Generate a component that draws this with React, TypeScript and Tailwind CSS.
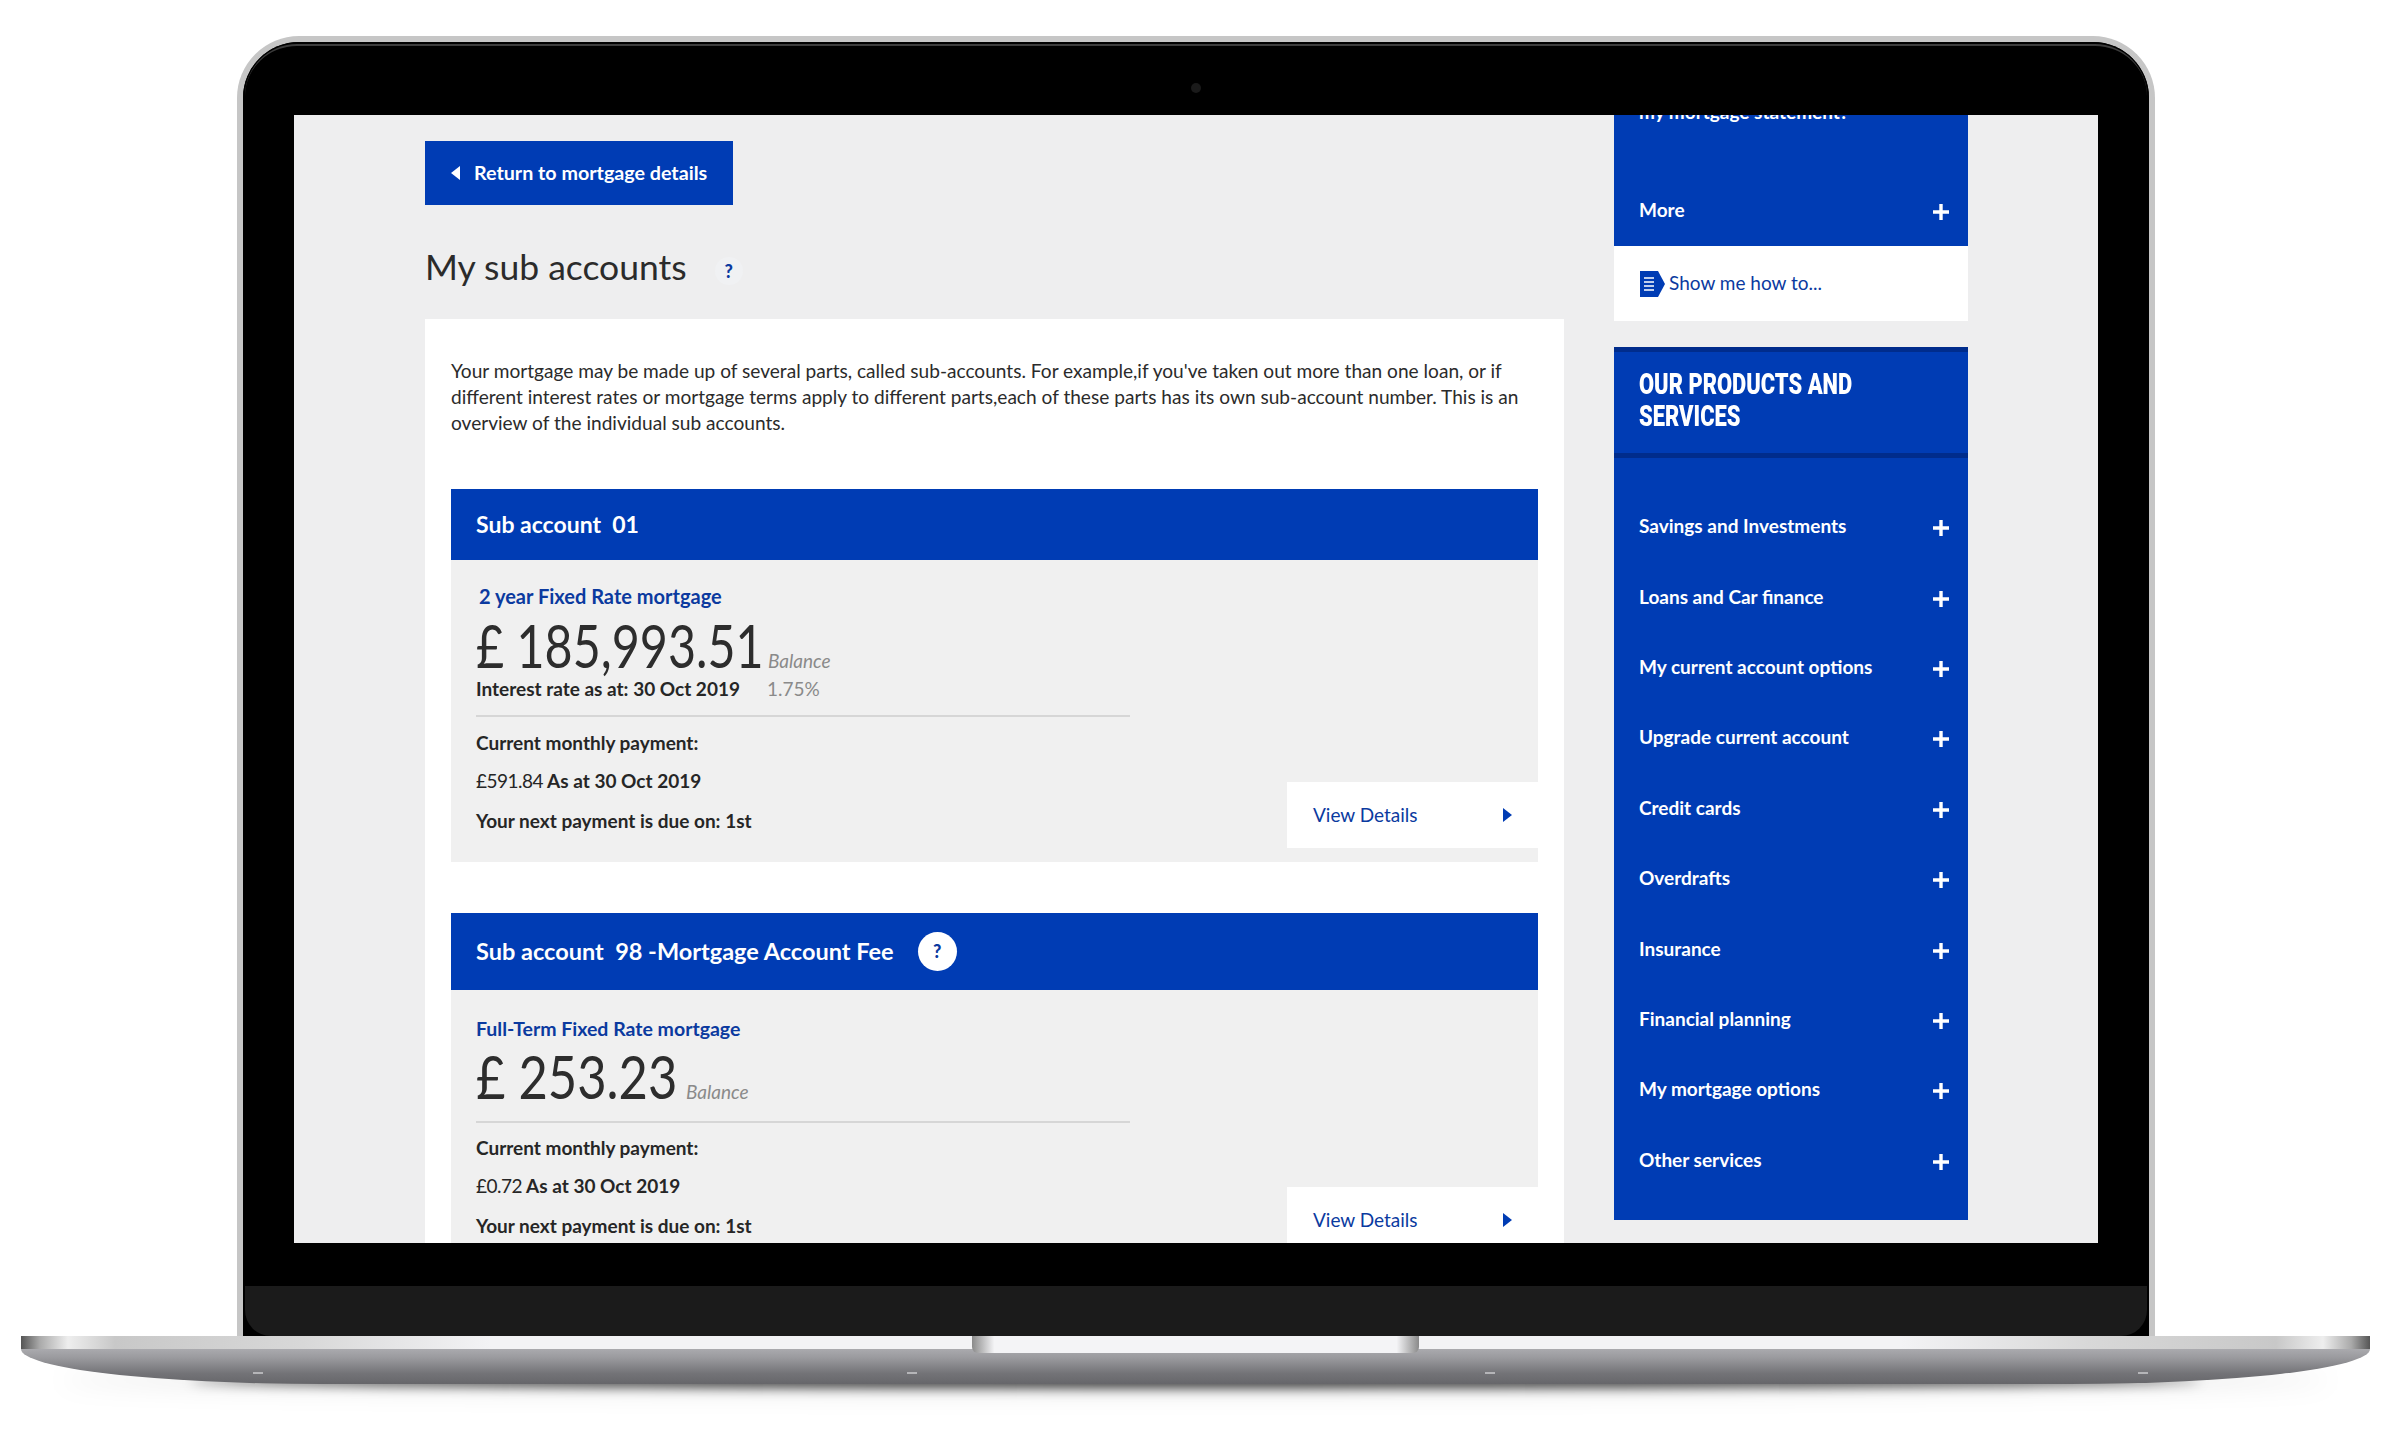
const font = { fontFamily: "Lato, 'Open Sans', sans-serif" };

function Plus() {
  return (
    <svg width="18" height="18" viewBox="0 0 18 18" className="mt-1 shrink-0">
      <path d="M9 1v16M1 9h16" stroke="#fff" strokeWidth="3.4" fill="none" />
    </svg>
  );
}

function Row({ label }: { label: string }) {
  return (
    <div className="flex h-[70.4px] items-center justify-between pl-[25px] pr-[18px] text-[19px] font-bold leading-6 text-white">
      <span>{label}</span>
      <Plus />
    </div>
  );
}

function ViewDetails({ className }: { className: string }) {
  return (
    <div className={`flex w-[251px] shrink-0 items-center justify-between bg-white pl-[26px] pr-[26px] text-[19px] text-[#0b3a9f] ${className}`}>
      <span>View Details</span>
      <svg width="9" height="14" viewBox="0 0 9 14"><path d="M0 0l9 7-9 7z" fill="#003cb4" /></svg>
    </div>
  );
}

const B = "text-[19px] font-bold leading-6 text-[#262626]";

function Amount({ value, width, scale }: { value: string; width: string; scale: string }) {
  return (
    <div className="flex h-16 items-baseline">
      <span className={`inline-block origin-left whitespace-nowrap text-[60px] leading-[64px] text-[#2d2d2d] ${width} ${scale}`}>{value}</span>
      <span className="ml-[7px] text-[19px] italic text-[#8a8a8a]">Balance</span>
    </div>
  );
}

export default function App() {
  return (
    <div className="relative h-[1431px] w-[2400px] overflow-hidden bg-white pt-[36px]" style={font}>
      {/* lid */}
      <div className="ml-[237px] h-[1300px] w-[1918px] rounded-t-[62px] border-x-[6px] border-t-[6px] border-[#c6c6c6] bg-black">
        <div className="flex h-full flex-col rounded-t-[56px] border-x-2 border-t-2 border-[#000] bg-black">
          <div className="flex h-[71px] shrink-0 items-center justify-center rounded-t-[52px] border-t-2 border-[#3c3c3c]">
            <div className="mt-[15px] h-[10px] w-[10px] rounded-full bg-[#1a1a1a]" />
          </div>
          {/* screen */}
          <div className="mx-[49px] flex h-[1128px] shrink-0 overflow-hidden bg-[#eeeeef] pl-[131px]">
            <main className="w-[1139px] shrink-0 pt-[26px]">
              <div className="flex h-16 w-[308px] items-center bg-[#003cb4] pl-[26px] text-[19.7px] font-bold text-white">
                <svg width="9" height="14" viewBox="0 0 9 14" className="mr-[14px]"><path d="M9 0L0 7l9 7z" fill="#fff" /></svg>
                Return to mortgage details
              </div>
              <div className="mt-[35px] flex h-[54px] items-center">
                <h1 className="text-[35.5px] font-normal leading-[54px] text-[#2b2b2b]">My sub accounts</h1>
                <span className="ml-[28px] mt-2 flex h-7 w-7 items-center justify-center rounded-full bg-[#f0f1f3] text-[18px] font-black text-[#0b3a9f]">?</span>
              </div>
              <section className="mt-[25px] bg-white px-[26px] pt-[39px]">
                <p className="mb-[53px] whitespace-nowrap text-[19.1px] leading-[26px] text-[#2b2b2b]">
                  Your mortgage may be made up of several parts, called sub-accounts. For example,if you've taken out more than one loan, or if
                  <br />different interest rates or mortgage terms apply to different parts,each of these parts has its own sub-account number. This is an
                  <br />overview of the individual sub accounts.
                </p>

                <div className="flex h-[71px] items-center bg-[#003cb4] pl-[25px] text-[23px] font-bold text-white">Sub account&nbsp; 01</div>
                <div className="flex h-[302px] items-end justify-between bg-[#f0f0f0]">
                  <div className="h-full w-[679px] pl-[25px] pt-[23px]">
                    <div className="ml-[3px] text-[20px] font-bold leading-[26px] text-[#0b3a9f]">2 year Fixed Rate mortgage</div>
                    <div className="mt-[4px]"><Amount value="£ 185,993.51" width="w-[285px]" scale="scale-x-[0.807]" /></div>
                    <div className={`flex ${B}`}>
                      <span className="w-[291px]">Interest rate as at: 30 Oct 2019</span>
                      <span className="font-normal text-[#8a8a8a]">1.75%</span>
                    </div>
                    <div className="mt-[14px] h-[2px] bg-[#d6d6d6]" />
                    <div className={`mt-[14px] ${B}`}>Current monthly payment:</div>
                    <div className={`mt-[14px] ${B}`}><span className="font-normal tracking-[-0.5px]">£591.84</span> As at 30 Oct 2019</div>
                    <div className={`mt-[16px] ${B}`}>Your next payment is due on: 1st</div>
                  </div>
                  <ViewDetails className="mb-[14px] h-[66px]" />
                </div>

                <div className="mt-[51px] flex h-[77px] items-center bg-[#003cb4] pl-[25px] text-[23.5px] font-bold text-white">
                  Sub account&nbsp; 98 -Mortgage Account Fee
                  <span className="ml-[24px] flex h-[39px] w-[39px] items-center justify-center rounded-full bg-white text-[18px] font-black text-[#0b3a9f]">?</span>
                </div>
                <div className="flex h-[302px] items-start justify-between bg-[#f0f0f0]">
                  <div className="h-full w-[679px] pl-[25px] pt-[26px]">
                    <div className="text-[19.5px] font-bold leading-[26px] text-[#0b3a9f]">Full-Term Fixed Rate mortgage</div>
                    <div className="mt-[2px]"><Amount value="£ 253.23" width="w-[203px]" scale="scale-x-[0.845]" /></div>
                    <div className="mt-[13px] h-[2px] bg-[#d6d6d6]" />
                    <div className={`mt-[13px] ${B}`}>Current monthly payment:</div>
                    <div className={`mt-[14px] ${B}`}><span className="font-normal tracking-[-0.5px]">£0.72</span> As at 30 Oct 2019</div>
                    <div className={`mt-[16px] ${B}`}>Your next payment is due on: 1st</div>
                  </div>
                  <ViewDetails className="mt-[197px] h-[66px]" />
                </div>
              </section>
            </main>

            <aside className="ml-[50px] w-[354px] shrink-0">
              <div className="-mt-[15px] h-[146px] bg-[#003cb4] pl-[25px] pr-[18px] text-[19px] font-bold leading-6 text-white">
                <div>my mortgage statement?</div>
                <div className="mt-[74px] flex items-center justify-between"><span>More</span><Plus /></div>
              </div>
              <div className="flex h-[75px] items-center bg-white pl-[25px]">
                <svg width="28" height="28" viewBox="0 0 28 28" className="mr-[2px]">
                  <path d="M1 1h18l7 13-7 13H1z" fill="#003cb4" />
                  <path d="M5 8h10M5 12h10M5 16h10M5 20h10" stroke="#fff" strokeWidth="1.6" />
                </svg>
                <span className="text-[19px] text-[#0b3a9f]">Show me how to...</span>
              </div>
              <div className="mt-[26px] h-[873px] border-t-[5px] border-t-[#002c8c] bg-[#003cb4]">
                <div className="h-[106px] border-b-[5px] border-b-[#002c8c] pl-[25px] pt-[16px]">
                  <div className="origin-left scale-x-[0.755] whitespace-nowrap text-[29px] font-black uppercase leading-[32px] text-white" style={{ fontFamily: "Roboto, sans-serif" }}>
                    Our products and<br />services
                  </div>
                </div>
                <div className="pt-[33px]">
                  {["Savings and Investments", "Loans and Car finance", "My current account options", "Upgrade current account", "Credit cards", "Overdrafts", "Insurance", "Financial planning", "My mortgage options", "Other services"].map((l) => (
                    <Row key={l} label={l} />
                  ))}
                </div>
              </div>
            </aside>
          </div>
          <div className="h-[43px] shrink-0 bg-black" />
          <div className="min-h-0 flex-1 rounded-b-[26px] bg-[#1b1b1b]" />
        </div>
      </div>

      {/* base */}
      <div className="relative ml-[21px] w-[2349px]">
        <div className="absolute left-[170px] right-[170px] top-[38px] h-[14px] rounded-[50%] bg-black/75 blur-[6px]" />
        <div className="absolute left-[40px] right-[40px] top-[32px] h-[24px] rounded-[50%] bg-black/10 blur-[12px]" />
        <div className="relative h-[13px] bg-[linear-gradient(90deg,#555_0%,#aaa_0.8%,#eee_2%,#c8c8c8_4%,#d8d8d8_12%,#f3f3f5_20%,#f3f3f5_80%,#d8d8d8_88%,#c8c8c8_96%,#eee_98%,#aaa_99.2%,#555_100%)]" />
        <div className="relative h-[35px] rounded-b-[300px_35px] bg-[linear-gradient(180deg,#aaaaae_0%,#9a9a9e_25%,#737377_70%,#66666a_100%)]" />
        <div className="absolute left-[951px] top-0 h-[17px] w-[447px] rounded-b-[6px] bg-[linear-gradient(90deg,#8a8a8a_0%,#f4f4f6_5%,#f4f4f6_95%,#8a8a8a_100%)]" />
        <div className="absolute left-[232px] top-[36px] h-[2px] w-[10px] bg-[#b5b5b8]" />
        <div className="absolute left-[886px] top-[36px] h-[2px] w-[10px] bg-[#b5b5b8]" />
        <div className="absolute left-[1464px] top-[36px] h-[2px] w-[10px] bg-[#b5b5b8]" />
        <div className="absolute left-[2117px] top-[36px] h-[2px] w-[10px] bg-[#b5b5b8]" />
      </div>
    </div>
  );
}
